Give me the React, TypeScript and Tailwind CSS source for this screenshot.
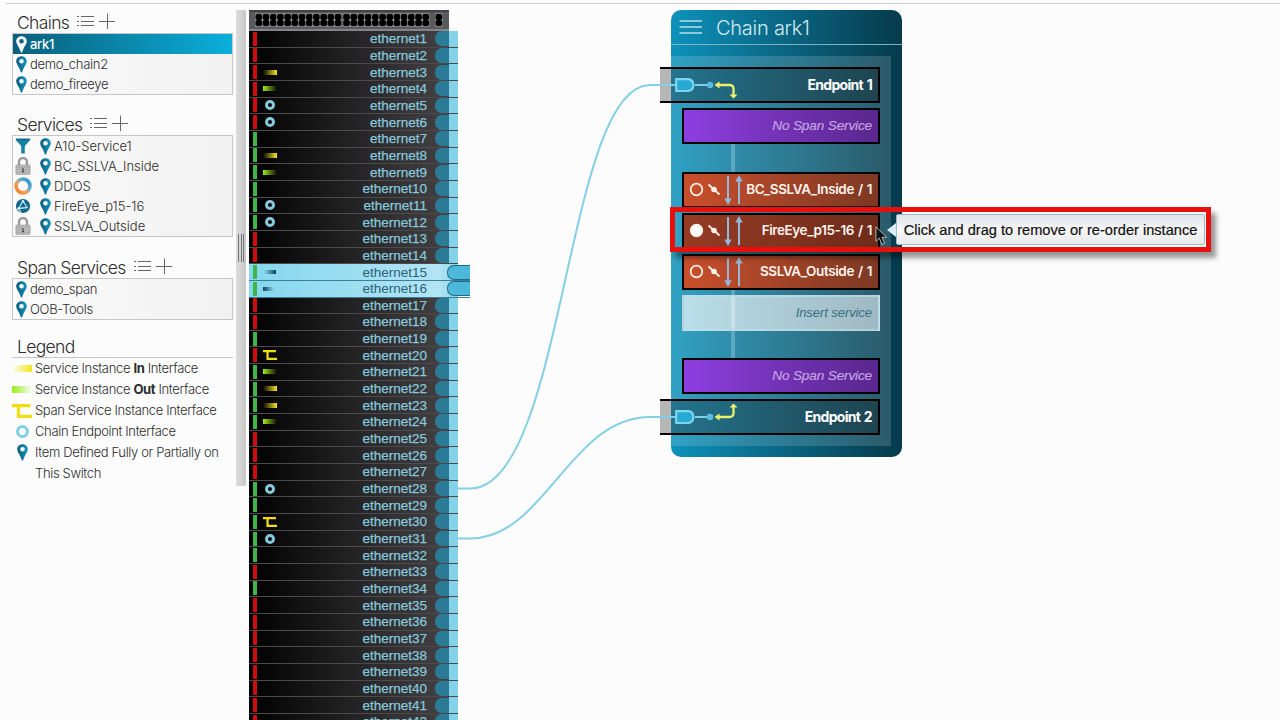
import type { ReactNode } from "react";

type Marker = "in" | "out" | "ring" | "span";

const redPorts = [1, 2, 3, 4, 5, 6, 13, 14, 17, 18, 20, 25, 26, 27, 33, 35, 36, 37, 38, 39, 40, 41, 42];

const markers: Record<number, Marker> = {
  3: "in", 4: "out", 5: "ring", 6: "ring", 8: "in", 9: "out", 11: "ring", 12: "ring",
  15: "in", 16: "out", 20: "span", 21: "out", 22: "in", 23: "in", 24: "out",
  28: "ring", 30: "span", 31: "ring",
};

const ports = Array.from({ length: 42 }, (_, i) => i + 1);

function Pin({ light = false }: { light?: boolean }) {
  return (
    <svg className="w-[11px] h-[17px] shrink-0" viewBox="0 0 11 17">
      <defs>
        <linearGradient id="pin" x1="0" x2="1">
          <stop offset="0" stopColor="#0b5c7c" />
          <stop offset="1" stopColor="#1496bd" />
        </linearGradient>
      </defs>
      <path
        fillRule="evenodd"
        fill={light ? "#f4fbfd" : "url(#pin)"}
        d="M5.5 0.3C2.5 0.3 0.2 2.5 0.2 5.3C0.2 8.2 3.5 11.2 4.9 16.6H6.1C7.5 11.2 10.8 8.2 10.8 5.3C10.8 2.5 8.5 0.3 5.5 0.3ZM5.5 3A2.3 2.3 0 1 1 5.5 7.6A2.3 2.3 0 1 1 5.5 3Z"
      />
    </svg>
  );
}

function Lock() {
  return (
    <svg className="w-4 h-[18px]" viewBox="0 0 16 18">
      <path d="M4 9V5a4 4 0 0 1 8 0V9" fill="none" stroke="#9a9a9a" strokeWidth="2.4" />
      <rect x="0.8" y="8" width="14.4" height="9.5" rx="1" fill="#b9b9b9" stroke="#9c9c9c" strokeWidth="0.6" />
      <path d="M1 10.5h14M1 13h14M1 15.5h14" stroke="#a4a4a4" strokeWidth="0.7" />
      <path d="M8 11.3v3.4M7 11.7h1.2M7 14.6h2" stroke="#444" strokeWidth="1.1" />
    </svg>
  );
}

function Funnel() {
  return (
    <svg className="w-4 h-[18px]" viewBox="0 0 16 18">
      <path d="M0.8 1.5H15.2V3L9.8 9V16.5H6.2V9L0.8 3Z" fill="#1680a3" />
      <path d="M1.5 2.6H14.5" stroke="#0b5c7c" strokeWidth="0.9" />
    </svg>
  );
}

function Donut() {
  return (
    <svg className="w-[18px] h-[18px]" viewBox="0 0 18 18">
      <defs>
        <linearGradient id="donut" x1="0" y1="1" x2="1" y2="0">
          <stop offset="0" stopColor="#f47b20" />
          <stop offset="0.4" stopColor="#f6a45c" />
          <stop offset="0.6" stopColor="#6eb0d0" />
          <stop offset="1" stopColor="#1691cd" />
        </linearGradient>
      </defs>
      <circle cx="9" cy="9" r="6.9" fill="none" stroke="url(#donut)" strokeWidth="3.6" />
    </svg>
  );
}

function Globe() {
  return (
    <svg className="w-4 h-4" viewBox="0 0 16 16">
      <circle cx="8" cy="8" r="7.1" fill="#12698a" />
      <path d="M8 3L3.5 10.5M8 3L12.5 10M3.5 10.5L12.5 9.5M3.5 10.5L6 14.5" fill="none" stroke="#b9e4ee" strokeWidth="1.3" />
      <circle cx="8" cy="3.2" r="1.2" fill="#d8f2f8" />
      <circle cx="3.6" cy="10.5" r="1.3" fill="#d8f2f8" />
    </svg>
  );
}

function Heading({ children, tools = true }: { children: ReactNode; tools?: boolean }) {
  return (
    <div className="flex h-[23px] items-center pl-[5px] text-[17.5px] font-light tracking-[-0.65px] text-[#2c2c2c]">
      <span className="whitespace-nowrap pt-1">{children}</span>
      {tools && (
        <svg className="ml-[8px] mb-[2px] h-4 w-10 shrink-0" viewBox="0 0 40 16" fill="none" stroke="#666" strokeWidth="1">
          <path d="M0 3.5h2M0 8.5h2M0 12.5h2" />
          <path d="M4 3.5h13M4 8.5h13M4 12.5h13" />
          <path d="M22 8.5h16M30.5 0.5v16" />
        </svg>
      )}
    </div>
  );
}

function Item({ icon, label, active = false }: { icon?: ReactNode; label: string; active?: boolean }) {
  return (
    <div
      className={`flex h-5 items-center pl-[3px] text-[13px] ${
        active ? "bg-gradient-to-r from-[#09607d] to-[#0aafda] text-white font-medium" : "font-light text-[#2c2c2c]"
      } ${icon ? "tracking-normal" : "tracking-[-0.28px]"}`}
    >
      {icon && <div className="-ml-[3px] mr-[7px] flex w-5 justify-center">{icon}</div>}
      <Pin light={active} />
      <span className="ml-[3px] whitespace-nowrap pt-[2px]">{label}</span>
    </div>
  );
}

function Bar({ kind }: { kind: "in" | "out" }) {
  return kind === "in" ? (
    <div className="h-[7px] w-5 bg-gradient-to-r from-transparent to-[#f4e61c]" />
  ) : (
    <div className="h-[7px] w-5 bg-gradient-to-r from-[#98ee1a] to-transparent" />
  );
}

function SpanMark({ className }: { className: string }) {
  return (
    <svg className={className} viewBox="0 0 20 14" preserveAspectRatio="none">
      <path d="M0 1.7H18.5M6.5 1.7V12.3M5 12.3H20" fill="none" stroke="#f2dc12" strokeWidth="3.2" />
    </svg>
  );
}

function LegendRow({ icon, children }: { icon: ReactNode; children: ReactNode }) {
  return (
    <div className="flex h-[21px] items-center">
      <div className="flex w-5 justify-center">{icon}</div>
      <div className="ml-[3px] whitespace-nowrap">{children}</div>
    </div>
  );
}

function Sidebar() {
  return (
    <aside className="ml-3 w-[221px] shrink-0 pt-[6px]">
      <Heading>Chains</Heading>
      <div className="border border-[#c6c6c8] bg-gradient-to-r from-[#fcfbfc] to-[#f1f1f1]">
        <Item label="ark1" active />
        <Item label="demo_chain2" />
        <Item label="demo_fireeye" />
      </div>
      <div className="mt-[17px]">
        <Heading>Services</Heading>
      </div>
      <div className="border border-[#c6c6c8] bg-gradient-to-r from-[#fcfbfc] to-[#f1f1f1]">
        <Item icon={<Funnel />} label="A10-Service1" />
        <Item icon={<Lock />} label="BC_SSLVA_Inside" />
        <Item icon={<Donut />} label="DDOS" />
        <Item icon={<Globe />} label="FireEye_p15-16" />
        <Item icon={<Lock />} label="SSLVA_Outside" />
      </div>
      <div className="mt-[18px]">
        <Heading>Span Services</Heading>
      </div>
      <div className="border border-[#c6c6c8] bg-gradient-to-r from-[#fcfbfc] to-[#f1f1f1]">
        <Item label="demo_span" />
        <Item label="OOB-Tools" />
      </div>
      <div className="mt-[14px] border-b border-[#c6c6c8]">
        <Heading tools={false}>Legend</Heading>
      </div>
      <div className="text-[13px] font-light tracking-[-0.35px] text-[#2c2c2c]">
        <LegendRow icon={<Bar kind="in" />}>
          Service Instance <b className="font-bold">In</b> Interface
        </LegendRow>
        <LegendRow icon={<Bar kind="out" />}>
          Service Instance <b className="font-bold">Out</b> Interface
        </LegendRow>
        <LegendRow icon={<SpanMark className="h-[14px] w-5" />}>Span Service Instance Interface</LegendRow>
        <LegendRow icon={<div className="h-[13px] w-[13px] rounded-full border-[3px] border-[#7fcfe4]" />}>
          Chain Endpoint Interface
        </LegendRow>
        <LegendRow icon={<Pin />}>Item Defined Fully or Partially on</LegendRow>
        <div className="ml-[23px] leading-5">This Switch</div>
      </div>
    </aside>
  );
}

function PortMarker({ kind, selected }: { kind: Marker; selected: boolean }) {
  if (kind === "ring") return <div className="h-[10px] w-[10px] rounded-full border-[3px] border-[#86c8dc]" />;
  if (kind === "span") return <SpanMark className="h-[10px] w-[14px]" />;
  if (selected) {
    return kind === "in" ? (
      <div className="h-1 w-3 bg-gradient-to-r from-transparent to-[#0c4358]" />
    ) : (
      <div className="mr-[3px] h-1 w-[11px] bg-gradient-to-r from-[#0c4358] to-transparent" />
    );
  }
  return kind === "in" ? (
    <div className="h-[5px] w-[14px] bg-gradient-to-r from-transparent to-[#f4e61c]" />
  ) : (
    <div className="h-[5px] w-[14px] bg-gradient-to-r from-[#a5ec10] to-transparent" />
  );
}

function PortRow({ n }: { n: number }) {
  const selected = n === 15 || n === 16;
  const red = redPorts.includes(n);
  return (
    <div
      className={`flex h-[16.67px] items-center border-b ${
        selected
          ? "w-[221px] border-[#3b7f96] bg-[linear-gradient(to_right,#84d7ee,#b2e4f4_190px,#85d4ea_209px,transparent_209px)]"
          : "w-[209px] border-[#4b4b4d] bg-[linear-gradient(to_right,#000,#0b0b0b_30px,#454245_200px,#84d3e8_200px)]"
      }`}
    >
      <div className={`ml-1 h-[14px] w-1 ${red ? "bg-[#cf0b0e]" : "bg-[#3fb548]"}`} />
      <div className="ml-[6px] flex w-[14px] items-center justify-center">
        {markers[n] && <PortMarker kind={markers[n]} selected={selected} />}
      </div>
      <div
        className={`w-[150px] text-right text-[13.5px] leading-[15px] ${
          selected ? "text-[#2c6177]" : "text-[#86c8dc] [-webkit-text-stroke:0.25px_#86c8dc]"
        }`}
      >
        ethernet{n}
      </div>
      {selected ? (
        <div className="ml-5 h-[15px] w-[23px] rounded-l-[7px] border border-r-0 border-[#216a82] bg-[#4cb9da]" />
      ) : (
        <div className="ml-[8px] h-[15px] w-[14px] rounded-l-[7px] bg-[#2c7b96]" />
      )}
    </div>
  );
}

function SwitchHead() {
  const cols = Array.from({ length: 24 }, (_, i) => 6.5 + i * 7.2 + (i >= 12 ? 1.3 : 0));
  return (
    <svg className="block h-[21px] w-[200px] bg-[#5a595b]" viewBox="0 0 200 21">
      <rect width="200" height="2" fill="#434245" />
      {[...cols, 186.5].map((x) => (
        <g key={x}>
          <rect x={x - 0.4} y="3.5" width="7.4" height="13" fill="#a0a0a0" />
          <rect x={x} y="4" width="6.7" height="6" rx="1.8" fill="#000" />
          <rect x={x} y="10" width="6.7" height="6" rx="1.8" fill="#000" />
        </g>
      ))}
      <rect y="19" width="200" height="2" fill="#858487" />
    </svg>
  );
}

function Endpoint({ label, down = false }: { label: string; down?: boolean }) {
  return (
    <div className="-ml-[11px] flex h-9 w-[220px] items-center justify-between border-y-2 border-r-2 border-black bg-black/28 pr-[6px]">
      <svg className="h-8 w-[90px]" viewBox="0 0 90 32" fill="none">
        <path d="M0 16H16M35 16H49" stroke="#7fd0e8" strokeWidth="2" />
        <path d="M16.2 10.2H28.5A6 6 0 0 1 28.5 22H16.2Z" fill="#27a9d5" stroke="#80d4ee" strokeWidth="2.2" />
        <circle cx="50" cy="16" r="3.2" fill="#5dbbe0" />
        <g transform={down ? "translate(0 1)" : "translate(0 31) scale(1 -1)"}>
          <path d="M57 15H69.5Q73.5 15 73.5 19V25" stroke="#eaf36b" strokeWidth="2.3" />
          <path d="M54.5 15L59.5 11.5V18.5ZM73.5 28.5L69.5 24.5H77.5Z" fill="#eaf36b" />
        </g>
      </svg>
      <span className="pb-px text-[14px] font-bold tracking-[-0.7px] text-white [word-spacing:1px]">{label}</span>
    </div>
  );
}

function NoSpan() {
  return (
    <div className="ml-[11px] flex h-9 w-[198px] items-center justify-end border-2 border-black bg-gradient-to-r from-[#8e3ee0] to-[#59278d] pr-[6px] pt-px font-['Liberation_Sans',sans-serif] text-[13.6px] italic tracking-[-0.15px] text-[#c6a3e2] [-webkit-text-stroke:0.2px_#c6a3e2]">
      No Span Service
    </div>
  );
}

function Instance({ label, active = false }: { label: string; active?: boolean }) {
  return (
    <div
      className={`ml-[11px] flex h-9 w-[198px] items-center justify-between border-2 border-black bg-gradient-to-r pr-[6px] ${
        active ? "from-[#963a22] to-[#6e2c1b]" : "from-[#c94f2b] to-[#7d3823]"
      }`}
    >
      <svg className="h-8 w-[60px] shrink-0" viewBox="0 0 60 32" fill="none">
        <circle cx="12.5" cy="15.5" r="5.8" stroke="#fff2ea" strokeWidth="1.7" fill={active ? "#fff" : "none"} />
        <path d="M24.5 10.5L35.5 20.5" stroke="#fff2ea" strokeWidth="1.7" />
        <circle cx="30" cy="15.5" r="2.8" fill="#fff2ea" />
        <g stroke="#93b8de" strokeWidth="2" fill="#93b8de">
          <path d="M44 2V26M55 30V6" />
          <path d="M42 25.5H46L44 29ZM53 6.5H57L55 3Z" />
        </g>
      </svg>
      <span className="-ml-1 whitespace-nowrap pb-[2px] text-[13.5px] font-semibold tracking-[-0.4px] text-[#fff4ee] [word-spacing:1px]">
        {label}
      </span>
    </div>
  );
}

function Spine({ className }: { className: string }) {
  return <div className={`ml-[60px] w-1 bg-[#7cbbd0]/60 ${className}`} />;
}

function ChainPanel() {
  return (
    <section className="relative ml-[213px] mt-[6px] h-[447px] w-[231px] shrink-0 rounded-[10px] bg-gradient-to-r from-[#0d92bb] to-[#063b4c]">
      <header className="flex h-[35px] items-center border-b border-[#7cb3c6] pl-2">
        <svg className="h-[14px] w-6" viewBox="0 0 24 14" stroke="#b8dde8" strokeWidth="1.3">
          <path d="M0.5 1H23M0.5 7H23M0.5 13H23" />
        </svg>
        <h2 className="ml-[13px] pt-[2px] text-[20px] font-light tracking-[-0.25px] text-[#d2eaf1]">Chain ark1</h2>
      </header>
      <div className="mt-[11px] flex h-[390px] w-[220px] flex-col bg-white/15 pt-[11px]">
        <Endpoint label="Endpoint 1" down />
        <div className="h-[5px]" />
        <NoSpan />
        <Spine className="h-7" />
        <Instance label="BC_SSLVA_Inside / 1" />
        <div className="h-[5px]" />
        <Instance label="FireEye_p15-16 / 1" active />
        <div className="h-[5px]" />
        <Instance label="SSLVA_Outside / 1" />
        <Spine className="h-[5px]" />
        <div className="ml-[11px] flex h-9 w-[198px] items-center border-2 border-[#c1e0e9]/60 bg-gradient-to-r from-[#b9deea] to-[#9fb9c2]">
          <div className="ml-[47px] h-8 w-1 bg-white/30" />
          <span className="ml-auto pr-[6px] font-['Liberation_Sans',sans-serif] text-[13.2px] italic tracking-[-0.15px] text-[#386f83]">
            Insert service
          </span>
        </div>
        <Spine className="h-[27px]" />
        <NoSpan />
        <div className="h-[5px]" />
        <Endpoint label="Endpoint 2" />
      </div>
    </section>
  );
}

export default function App() {
  return (
    <div className="relative h-[720px] w-[1280px] overflow-hidden bg-[#fdfcfd] font-['Inter',sans-serif]">
      <div className="ml-[6px] mt-[3px] h-px bg-[#cfcbd0]" />
      <main className="flex items-start">
        <Sidebar />
        <div className="ml-[3px] mt-[6px] flex h-[476px] w-[10px] shrink-0 items-center justify-center bg-gradient-to-r from-[#dedede] to-[#c6c6c6]">
          <div className="h-7 w-[6px] border-x border-[#777] px-[1.5px]">
            <div className="h-full w-px bg-[#777]" />
          </div>
        </div>
        <div className="ml-[3px] mt-[6px] w-[209px] shrink-0 font-['Liberation_Sans',sans-serif]">
          <SwitchHead />
          {ports.map((n) => (
            <PortRow key={n} n={n} />
          ))}
        </div>
        <ChainPanel />
      </main>

      {/* endpoint wires */}
      <svg className="pointer-events-none absolute left-0 top-0 h-[720px] w-[700px]" viewBox="0 0 700 720" fill="none" stroke="#83cfe5" strokeWidth="2">
        <path d="M449 488.5H470C565 488.5 565 85 650 85H662" />
        <path d="M449 538.5H470C545 538.5 570 417 650 417H662" />
      </svg>

      {/* instance tooltip */}
      <div className="absolute left-[670px] top-[207px] flex h-[45px] w-[541px] items-center border-[5px] border-[#e80f0c] shadow-[5px_6px_5px_rgba(0,0,0,0.4)]">
        <svg className="ml-auto h-4 w-[9px]" viewBox="0 0 9 16">
          <path d="M9 1V15L0 8Z" fill="#dcecf4" />
        </svg>
        <div className="mr-[1px] flex h-[31px] w-[309px] items-center justify-center rounded-[2px] border border-[#9fb8c8] bg-gradient-to-b from-[#dfe2e8] via-[#f7f7f8] to-[#e9eaec] pt-[3px] font-['Liberation_Sans',sans-serif] text-[14.6px] whitespace-nowrap text-[#111] [-webkit-text-stroke:0.2px_#111]">
          Click and drag to remove or re-order instance
        </div>
      </div>
      <svg className="absolute left-[875px] top-[226px] h-[20px] w-[13px]" viewBox="0 0 12 19">
        <path d="M0.7 0.8V14.5L3.9 11.5L6.4 17.5L8.9 16.4L6.4 10.7H11Z" fill="#111" stroke="#bbb" strokeWidth="0.9" />
      </svg>
    </div>
  );
}
